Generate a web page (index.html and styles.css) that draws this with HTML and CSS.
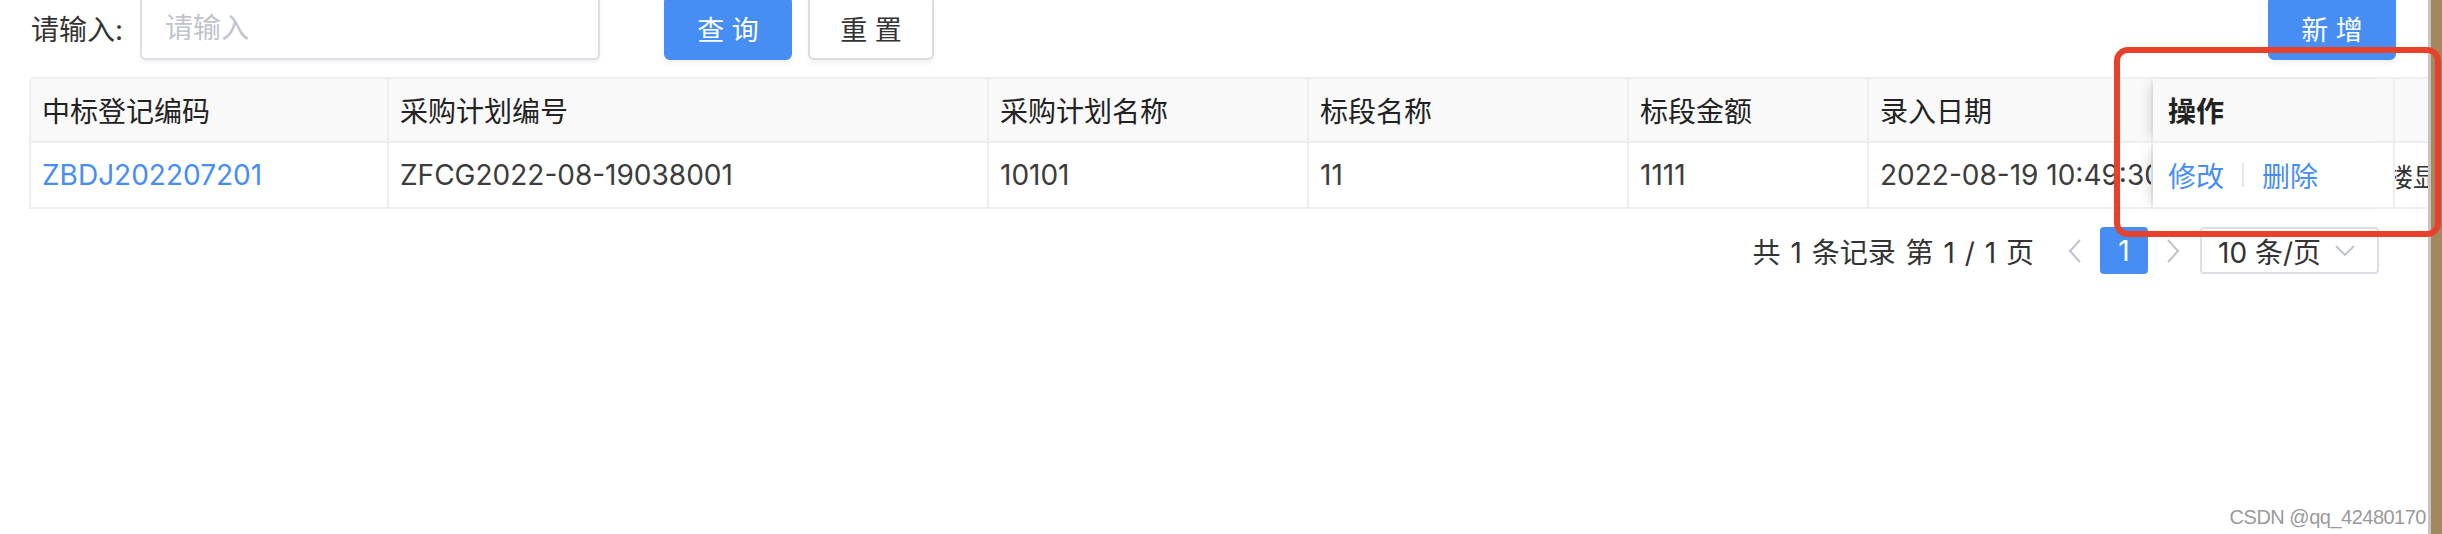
FILE: index.html
```html
<!DOCTYPE html>
<html lang="zh-CN">
<head>
    <meta charset="UTF-8">
    <meta name="viewport" content="width=device-width, initial-scale=1.0">
    <title>中标登记</title>
    <link rel="stylesheet" href="styles.css">
</head>
<body>
    <div class="screen">
        <div class="window">
            <div class="content">
                <!-- 검색 영역 -->
                <div class="search-bar">
                    <label class="search-label">请输入:</label>
                    <input class="search-input" type="text" placeholder="请输入">
                    <button class="btn btn-primary btn-query">查 询</button>
                    <button class="btn btn-reset">重 置</button>
                    <button class="btn btn-primary btn-add">新 增</button>
                </div>

                <!-- 목록 -->
                <div class="grid">
                    <div class="cell head">中标登记编码</div>
                    <div class="cell head">采购计划编号</div>
                    <div class="cell head">采购计划名称</div>
                    <div class="cell head">标段名称</div>
                    <div class="cell head">标段金额</div>
                    <div class="cell head">录入日期</div>
                    <div class="cell head fixed">操作</div>
                    <div class="cell head extra"></div>

                    <div class="cell body"><a class="link" href="#">ZBDJ202207201</a></div>
                    <div class="cell body">ZFCG2022-08-19038001</div>
                    <div class="cell body">10101</div>
                    <div class="cell body">11</div>
                    <div class="cell body">1111</div>
                    <div class="cell body">2022-08-19 10:49:30</div>
                    <div class="cell body fixed">
                        <a class="link" href="#">修改</a>
                        <span class="divider"></span>
                        <a class="link" href="#">删除</a>
                    </div>
                    <div class="cell body extra"><span class="peek">楼显</span></div>
                </div>

                <!-- 페이지 -->
                <div class="pager">
                    <span class="total">共 1 条记录 第 1 / 1 页</span>
                    <span class="page-arrow">
                        <svg width="16" height="26" viewBox="0 0 16 26"><polyline points="13,2 3,13 13,24" fill="none" stroke="#c0c4cc" stroke-width="2"/></svg>
                    </span>
                    <span class="page-num">1</span>
                    <span class="page-arrow">
                        <svg width="16" height="26" viewBox="0 0 16 26"><polyline points="3,2 13,13 3,24" fill="none" stroke="#c0c4cc" stroke-width="2"/></svg>
                    </span>
                    <span class="page-size">
                        10 条/页
                        <svg width="20" height="12" viewBox="0 0 20 12"><polyline points="1,1 10,10 19,1" fill="none" stroke="#c0c4cc" stroke-width="2"/></svg>
                    </span>
                </div>
            </div>

            <div class="watermark">CSDN @qq_42480170</div>
        </div>
        <div class="edge"></div>

        <!-- 표시 박스 -->
        <div class="mark"></div>
    </div>
</body>
</html>
```

FILE: styles.css
```css
* {
    box-sizing: border-box;
}

html, body {
    margin: 0;
    padding: 0;
}

body {
    font-family: Inter, "Noto Sans CJK SC", sans-serif;
    background-color: #fff;
    overflow: hidden;
}

.screen {
    position: relative;
    display: flex;
    height: 534px;
}

.window {
    position: relative;
    flex: 1;
    overflow: hidden;
    background-color: #fff;
}

.edge {
    width: 14px;
    border-left: 3px solid #c4c4c4;
    background-color: #a5875e;
}

.content {
    margin-left: 29px;
    width: 2367px;
}

/* 검색 영역 */
.search-bar {
    display: flex;
    align-items: center;
    height: 64px;
    margin-top: -4px;
}

.search-label {
    width: 111px;
    font-size: 28px;
    color: #333;
    padding-left: 2px;
}

.search-input {
    width: 460px;
    height: 64px;
    border: 2px solid #dcdfe6;
    border-radius: 6px;
    padding: 0 23px;
    font-family: inherit;
    font-size: 28px;
    color: #333;
    box-shadow: 0 3px 3px rgba(0, 0, 0, 0.05);
    outline: none;
}

.search-input::placeholder {
    color: #c0c4cc;
}

.btn {
    height: 64px;
    width: 128px;
    border: 2px solid #dcdcdc;
    border-radius: 6px;
    background-color: #fff;
    color: #333;
    font-family: inherit;
    font-size: 27px;
    box-shadow: 0 4px 4px rgba(0, 0, 0, 0.05);
    cursor: pointer;
}

.btn-primary {
    background-color: #468df4;
    border-color: #468df4;
    color: #fff;
}

.btn-query {
    margin-left: 64px;
}

.btn-reset {
    margin-left: 16px;
    width: 126px;
}

.btn-add {
    margin-left: auto;
}

/* 목록 */
.grid {
    display: grid;
    grid-template-columns: 358px 600px 320px 320px 240px 284px 242px 60px;
    width: 2426px;
    margin-top: 17px;
    border-top: 2px solid #eee;
    border-left: 2px solid #eee;
    border-top-left-radius: 6px;
}

.cell {
    display: flex;
    align-items: center;
    padding-left: 11px;
    border-right: 2px solid #eee;
    border-bottom: 2px solid #eee;
    font-size: 28px;
    white-space: nowrap;
    overflow: hidden;
}

.head {
    height: 64px;
    background-color: #f9f9f9;
    color: #222;
    font-weight: 400;
}

.body {
    height: 66px;
    background-color: #fff;
    color: #3c3c3c;
}

.fixed {
    padding-left: 15px;
    box-shadow: -10px 0 10px -6px rgba(0, 0, 0, 0.12);
    overflow: visible;
}

.head.fixed {
    font-weight: 700;
}

.extra {
    padding-left: 0;
}

.link {
    color: #468df4;
    text-decoration: none;
}

.divider {
    width: 2px;
    height: 24px;
    margin: 0 18px;
    background-color: #e6e6e6;
}

.peek {
    margin-left: -8px;
    font-size: 26px;
    color: #333;
}

/* 페이지 */
.pager {
    display: flex;
    justify-content: flex-end;
    align-items: center;
    height: 47px;
    margin-top: 18px;
    padding-right: 17px;
    font-size: 28px;
    color: #333;
}

.total {
    margin-right: 16px;
    word-spacing: 2px;
}

.page-arrow {
    display: flex;
    justify-content: center;
    width: 50px;
}

.page-num {
    display: flex;
    justify-content: center;
    align-items: center;
    width: 48px;
    height: 47px;
    border-radius: 4px;
    background-color: #468df4;
    color: #fff;
}

.page-size {
    display: flex;
    justify-content: space-between;
    align-items: center;
    width: 179px;
    height: 47px;
    margin-left: 2px;
    padding: 0 22px 0 16px;
    border: 2px solid #dcdfe6;
    border-radius: 4px;
}

.watermark {
    position: absolute;
    right: 2px;
    bottom: 5px;
    font-family: "Liberation Sans", sans-serif;
    font-size: 20px;
    letter-spacing: -0.5px;
    color: #9a9a9a;
    text-shadow: 0 0 1px #fff;
}

/* 표시 박스 */
.mark {
    position: absolute;
    left: 2114px;
    top: 47px;
    width: 327px;
    height: 190px;
    border: 6px solid #e7412b;
    border-radius: 14px;
}
```
